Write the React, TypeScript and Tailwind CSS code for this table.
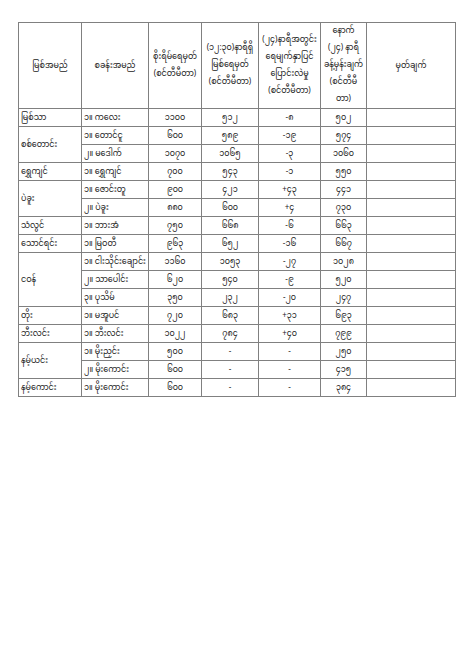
import React from "react";

type Row = { river?: string; span?: number; station: string; danger: string; now: string; change: string; fc: string };

const rows: Row[] = [
  { river: "မြစ်သာ", span: 1, station: "၁။ ကလေး", danger: "၁၁၀၀", now: "၅၁၂", change: "-၈", fc: "၅၀၂" },
  { river: "စစ်တောင်း", span: 2, station: "၁။ တောင်ငူ", danger: "၆၀၀", now: "၅၈၉", change: "-၁၉", fc: "၅၇၄" },
  { station: "၂။ မဒေါက်", danger: "၁၀၇၀", now: "၁၀၆၅", change: "-၃", fc: "၁၀၆၀" },
  { river: "ရွှေကျင်", span: 1, station: "၁။ ရွှေကျင်", danger: "၇၀၀", now: "၅၄၃", change: "-၁", fc: "၅၅၀" },
  { river: "ပဲခူး", span: 2, station: "၁။ ဇောင်းတူ", danger: "၉၀၀", now: "၄၂၁", change: "+၄၃", fc: "၄၄၁" },
  { station: "၂။ ပဲခူး", danger: "၈၈၀", now: "၆၀၀", change: "+၄", fc: "၇၃၀" },
  { river: "သံလွင်", span: 1, station: "၁။ ဘားအံ", danger: "၇၅၀", now: "၆၆၈", change: "-၆", fc: "၆၆၃" },
  { river: "သောင်ရင်း", span: 1, station: "၁။ မြဝတီ", danger: "၉၆၃", now: "၆၅၂", change: "-၁၆", fc: "၆၆၇" },
  { river: "ငဝန်", span: 3, station: "၁။ ငါးသိုင်းချောင်း", danger: "၁၁၆၀", now: "၁၀၅၃", change: "-၂၇", fc: "၁၀၂၈" },
  { station: "၂။ သာပေါင်း", danger: "၆၂၀", now: "၅၄၀", change: "-၉", fc: "၅၂၀" },
  { station: "၃။ ပုသိမ်", danger: "၃၅၀", now: "၂၃၂", change: "-၂၀", fc: "၂၄၇" },
  { river: "တိုး", span: 1, station: "၁။ မအူပင်", danger: "၇၂၀", now: "၆၈၃", change: "+၃၁", fc: "၆၉၃" },
  { river: "ဘီးလင်း", span: 1, station: "၁။ ဘီးလင်း", danger: "၁၀၂၂", now: "၇၈၄", change: "+၄၀", fc: "၇၉၉" },
  { river: "နမ့်ယင်း", span: 2, station: "၁။ မိုးညှင်း", danger: "၅၀၀", now: "-", change: "-", fc: "၂၅၀" },
  { station: "၂။ မိုးကောင်း", danger: "၆၀၀", now: "-", change: "-", fc: "၄၁၅" },
  { river: "နမ့်ကောင်း", span: 1, station: "၁။ မိုးကောင်း", danger: "၆၀၀", now: "-", change: "-", fc: "၃၈၄" },
];

const cell = "border border-[#808080] p-0";

export default function App() {
  return (
    <div
      className="w-[474px] h-[669px] bg-white text-[#222] pt-[22px] pl-[18px]"
      style={{ fontFamily: '"Noto Sans Myanmar", "Padauk", "Myanmar Text", "Noto Sans", "DejaVu Sans", sans-serif' }}
    >
      <table className="border-collapse border border-[#555] w-[437px] table-fixed text-[8px]">
        <colgroup>
          <col className="w-[63px]" />
          <col className="w-[67px]" />
          <col className="w-[53px]" />
          <col className="w-[57px]" />
          <col className="w-[62px]" />
          <col className="w-[46px]" />
          <col className="w-[89px]" />
        </colgroup>
        <thead>
          <tr className="h-[86px]">
            <th className={`${cell} font-normal text-center align-middle`}>မြစ်အမည်</th>
            <th className={`${cell} font-normal text-center align-middle`}>စခန်းအမည်</th>
            <th className={`${cell} font-normal text-center align-middle leading-[17px]`}>
              စိုးရိမ်ရေမှတ်<br />(စင်တီမီတာ)
            </th>
            <th className={`${cell} font-normal text-center align-middle leading-[17px]`}>
              (၁၂:၃၀)နာရီရှိ<br />မြစ်ရေမှတ်<br />(စင်တီမီတာ)
            </th>
            <th className={`${cell} font-normal text-center align-middle leading-[17px]`}>
              (၂၄)နာရီအတွင်း<br />ရေမျက်နှာပြင်<br />ပြောင်းလဲမှု<br />(စင်တီမီတာ)
            </th>
            <th className={`${cell} font-normal text-center align-middle leading-[17px]`}>
              နောက်<br />(၂၄) နာရီ<br />ခန့်မှန်းချက်<br />(စင်တီမီ<br />တာ)
            </th>
            <th className={`${cell} font-normal text-center align-middle`}>မှတ်ချက်</th>
          </tr>
        </thead>
        <tbody>
          {rows.map((r, i) => (
            <tr key={i} className="h-[18px] leading-[12px]">
              {r.river !== undefined && (
                <td rowSpan={r.span} className={`${cell} text-left pl-[2px] align-middle`}>
                  {r.river}
                </td>
              )}
              <td className={`${cell} text-left pl-[2px] align-middle`}>{r.station}</td>
              <td className={`${cell} text-center align-middle`}>{r.danger}</td>
              <td className={`${cell} text-center align-middle`}>{r.now}</td>
              <td className={`${cell} text-center align-middle`}>{r.change}</td>
              <td className={`${cell} text-center align-middle`}>{r.fc}</td>
              <td className={cell}></td>
            </tr>
          ))}
        </tbody>
      </table>
    </div>
  );
}
